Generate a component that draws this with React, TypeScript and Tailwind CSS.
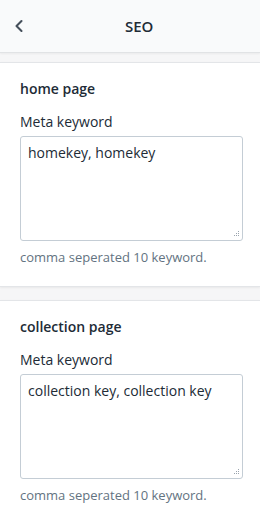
import { ChevronLeft } from 'lucide-react';

function KeywordSection({ title, value }: { title: string; value: string }) {
  return (
    <section className="bg-white border-y border-[#e3e5e8] shadow-[0_1px_2px_rgba(0,0,0,0.06)] px-5 pt-[16px] pb-[19px]">
      <h2 className="text-[14px] font-semibold text-[#212b36] leading-5">{title}</h2>
      <label className="block mt-[13px] text-[14px] text-[#212b36] leading-5">Meta keyword</label>
      <div className="relative mt-[4px] w-[223px]">
        <textarea
          defaultValue={value}
          className="block w-full h-[105px] resize-none rounded-[3px] border border-[#c4cdd5] px-[7px] py-[6px] text-[14px] leading-5 text-[#212b36] outline-none"
        />
        {/* resize grip */}
        <svg className="absolute right-[3px] bottom-[3px] pointer-events-none" width="7" height="7" viewBox="0 0 7 7" fill="#9aa4ae">
          <rect x="5" y="0" width="1" height="1" />
          <rect x="3" y="2" width="1" height="1" />
          <rect x="5" y="2" width="1" height="1" />
          <rect x="1" y="4" width="1" height="1" />
          <rect x="3" y="4" width="1" height="1" />
          <rect x="5" y="4" width="1" height="1" />
        </svg>
      </div>
      <p className="mt-[6px] text-[13px] leading-5 text-[#637381]">comma seperated 10 keyword.</p>
    </section>
  );
}

export default function App() {
  return (
    <div className="w-[260px] min-h-[522px] bg-[#f6f6f7] font-['Open_Sans',sans-serif]">
      <header className="relative h-[53px] bg-[#f9fafb] border-b border-[#e1e3e5] shadow-[0_1px_2px_rgba(0,0,0,0.05)] flex items-center">
        <button className="ml-[9px] text-[#454f5b]">
          <ChevronLeft className="w-5 h-5" strokeWidth={2.5} />
        </button>
        <h1 className="absolute left-[125px] text-[15px] font-semibold text-[#212b36]">SEO</h1>
      </header>
      <div className="pt-[9px] flex flex-col gap-[13px]">
        <KeywordSection title="home page" value="homekey, homekey" />
        <KeywordSection title="collection page" value="collection key, collection key" />
      </div>
    </div>
  );
}
